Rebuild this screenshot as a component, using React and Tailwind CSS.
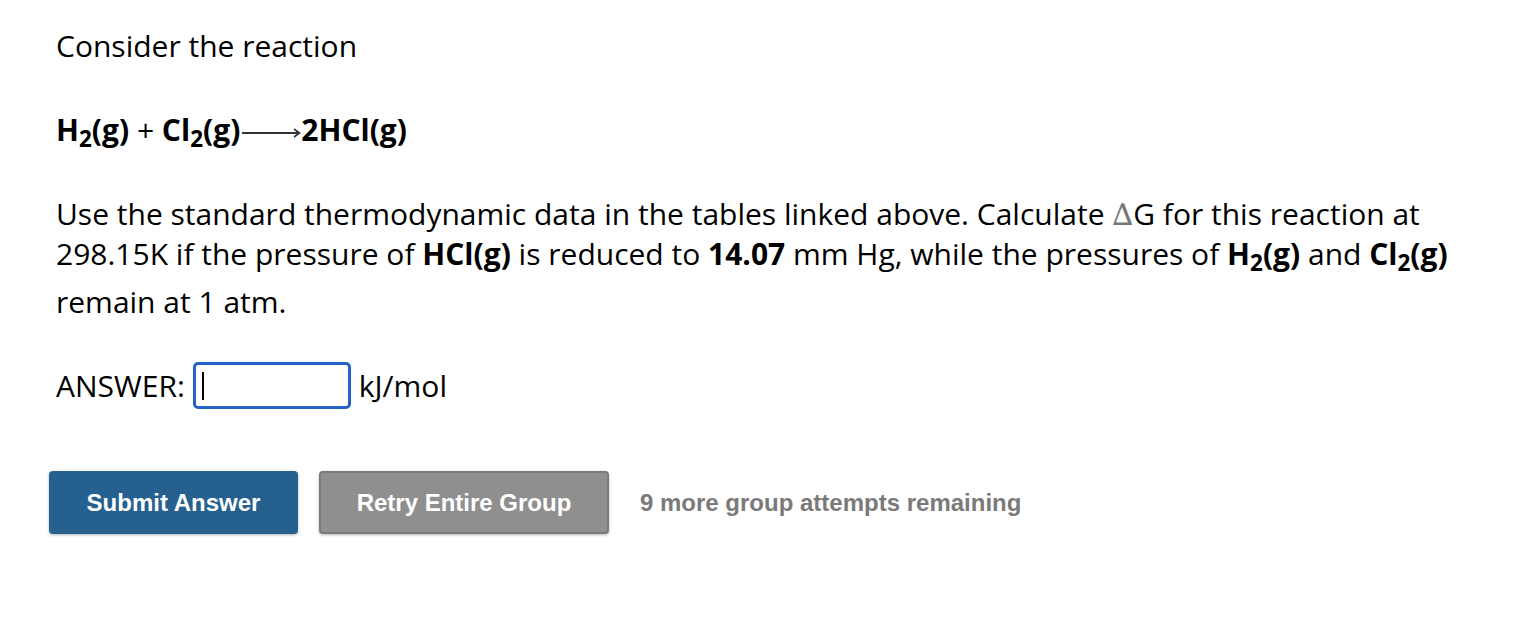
function Sub({ children }) {
  return <sub>{children}</sub>;
}

function Arrow() {
  return (
    <svg width="59" height="14" viewBox="0 0 59 14" className="ml-[2px] inline-block align-middle">
      <line x1="0" y1="7" x2="57" y2="7" stroke="#333" strokeWidth="2" />
      <path d="M52 3 L57.5 7 L52 11" fill="none" stroke="#333" strokeWidth="1.6" />
    </svg>
  );
}

export default function App() {
  return (
    <div className="min-h-screen bg-white text-black" style={{ fontFamily: '"Open Sans", sans-serif' }}>
      <div className="pl-[56px] pt-[26px] text-[30px] leading-[40px]">
        <p className="h-[40px]">Consider the reaction</p>

        <p className="mt-[44px] h-[40px] font-bold whitespace-nowrap">
          H<Sub>2</Sub>(g) <span className="font-normal">+</span> Cl<Sub>2</Sub>(g)
          <Arrow />
          2HCl(g)
        </p>

        <div className="mt-[44px] whitespace-nowrap">
          <p className="h-[40px]">
            Use the standard thermodynamic data in the tables linked above. Calculate{' '}
            <span className="leading-none text-[#777]" style={{ fontFamily: '"DejaVu Serif", serif' }}>∆</span>G for this
            reaction at
          </p>
          <p className="h-[40px]">
            298.15K if the pressure of <b>HCl(g)</b> is reduced to <b>14.07</b> mm Hg, while the pressures of{' '}
            <b>H<Sub>2</Sub>(g)</b> and <b>Cl<Sub>2</Sub>(g)</b>
          </p>
          <p className="mt-[8px] h-[40px]">remain at 1 atm.</p>
        </div>

        <div className="mt-[40px] flex h-[47px] items-center">
          <span>ANSWER:</span>
          <div className="ml-[8px] flex h-[47px] w-[158px] items-center rounded-[5px] border-[3px] border-[#2563c9] pl-[6px]">
            <span className="h-[28px] w-[2px] bg-black" />
          </div>
          <span className="ml-[8px]">kJ/mol</span>
        </div>
      </div>

      <div className="mt-[62px] flex items-center pl-[49px]" style={{ fontFamily: '"Liberation Sans", Arial, sans-serif' }}>
        <button className="h-[63px] w-[249px] rounded-[4px] bg-[#26608f] text-[24px] font-bold text-white shadow-[0_1px_3px_rgba(0,0,0,0.3)]">
          Submit Answer
        </button>
        <button className="ml-[21px] h-[63px] w-[290px] rounded-[4px] border-2 border-[#7a7a7a] bg-[#8f8f8f] text-[24px] font-bold text-white shadow-[0_1px_3px_rgba(0,0,0,0.3)]">
          Retry Entire Group
        </button>
        <span className="ml-[31px] text-[24px] font-bold text-[#7a7a7a]">9 more group attempts remaining</span>
      </div>
    </div>
  );
}
